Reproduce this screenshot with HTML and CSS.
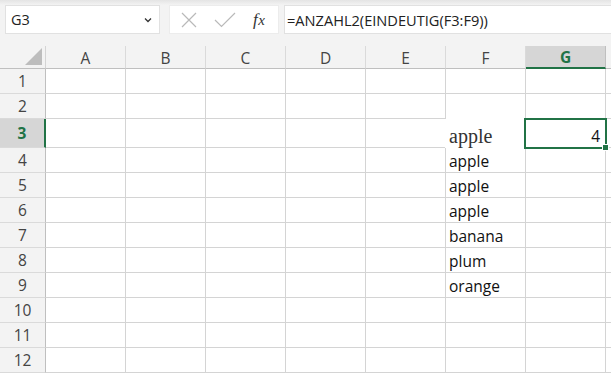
FILE: index.html
```html
<!DOCTYPE html>
<html>
<head>
<meta charset="utf-8">
<link rel="stylesheet" href="styles.css">
</head>
<body>
<div class="app">
  <div class="toolbar">
    <div class="namebox">
      <span class="name">G3</span>
      <svg class="chev" width="8" height="6" viewBox="0 0 8 6"><path d="M1 1.5 L4 4.5 L7 1.5" fill="none" stroke="#333" stroke-width="1.3"/></svg>
    </div>
    <div class="fxgroup">
      <svg class="ico" width="18" height="18" viewBox="0 0 18 18"><path d="M2 2 L16 16 M16 2 L2 16" stroke="#b9b9b9" stroke-width="1.2" fill="none"/></svg>
      <svg class="ico" width="22" height="16" viewBox="0 0 22 16"><path d="M1 8 L7.5 14.5 L21 1" stroke="#b9b9b9" stroke-width="1.2" fill="none"/></svg>
      <span class="fx">f<i>x</i></span>
    </div>
    <div class="formula">=ANZAHL2(EINDEUTIG(F3:F9))</div>
  </div>
  <div class="grid">
    <div class="corner"><div class="tri"></div></div>
    <div class="ch">A</div><div class="ch">B</div><div class="ch">C</div><div class="ch">D</div><div class="ch">E</div><div class="ch">F</div><div class="ch sel">G</div><div class="ch last"></div>

    <div class="rh">1</div><div class="c"></div><div class="c"></div><div class="c"></div><div class="c"></div><div class="c"></div><div class="c"></div><div class="c"></div><div class="c last"></div>
    <div class="rh">2</div><div class="c"></div><div class="c"></div><div class="c"></div><div class="c"></div><div class="c"></div><div class="c nob"></div><div class="c"></div><div class="c last"></div>
    <div class="rh sel tall">3</div><div class="c"></div><div class="c"></div><div class="c"></div><div class="c"></div><div class="c nor"></div><div class="c rich nob">apple</div><div class="c active">4<span class="handle"></span></div><div class="c last"></div>
    <div class="rh">4</div><div class="c"></div><div class="c"></div><div class="c"></div><div class="c"></div><div class="c"></div><div class="c t">apple</div><div class="c"></div><div class="c last"></div>
    <div class="rh">5</div><div class="c"></div><div class="c"></div><div class="c"></div><div class="c"></div><div class="c"></div><div class="c t">apple</div><div class="c"></div><div class="c last"></div>
    <div class="rh">6</div><div class="c"></div><div class="c"></div><div class="c"></div><div class="c"></div><div class="c"></div><div class="c t">apple</div><div class="c"></div><div class="c last"></div>
    <div class="rh">7</div><div class="c"></div><div class="c"></div><div class="c"></div><div class="c"></div><div class="c"></div><div class="c t">banana</div><div class="c"></div><div class="c last"></div>
    <div class="rh">8</div><div class="c"></div><div class="c"></div><div class="c"></div><div class="c"></div><div class="c"></div><div class="c t">plum</div><div class="c"></div><div class="c last"></div>
    <div class="rh">9</div><div class="c"></div><div class="c"></div><div class="c"></div><div class="c"></div><div class="c"></div><div class="c t">orange</div><div class="c"></div><div class="c last"></div>
    <div class="rh">10</div><div class="c"></div><div class="c"></div><div class="c"></div><div class="c"></div><div class="c"></div><div class="c"></div><div class="c"></div><div class="c last"></div>
    <div class="rh">11</div><div class="c"></div><div class="c"></div><div class="c"></div><div class="c"></div><div class="c"></div><div class="c"></div><div class="c"></div><div class="c last"></div>
    <div class="rh">12</div><div class="c"></div><div class="c"></div><div class="c"></div><div class="c"></div><div class="c"></div><div class="c"></div><div class="c"></div><div class="c last"></div>
  </div>
</div>
</body>
</html>
```

FILE: styles.css
```css
* { box-sizing: border-box; }
html, body { margin: 0; padding: 0; }
body {
  width: 611px;
  height: 373px;
  overflow: hidden;
  background: #fff;
  font-family: "Open Sans", "Noto Sans", sans-serif;
}
.app { width: 611px; overflow: hidden; }
.toolbar {
  height: 46px;
  background: linear-gradient(#e4e4e4 0px, #f3f3f3 5px, #f3f3f3 100%);
  display: flex;
  align-items: flex-start;
  padding: 5px 0 0 5px;
}
.namebox {
  width: 155px;
  height: 29px;
  background: #fff;
  border: 1px solid #e1e1e1;
  display: flex;
  align-items: center;
  justify-content: space-between;
  padding: 0 7px 0 5px;
  font-size: 14.5px;
  color: #222;
}
.chev { margin-top: 1px; }
.fxgroup {
  margin-left: 9px;
  width: 110px;
  height: 29px;
  background: #fff;
  border: 1px solid #ececec;
  display: flex;
  align-items: center;
  padding: 0 0 0 10px;
}
.fxgroup .ico:first-child { margin-right: 16px; }
.fxgroup .ico:nth-child(2) { margin-right: 17px; }
.fx {
  font-family: "Liberation Serif", serif;
  font-style: italic;
  font-size: 17px;
  color: #333;
  letter-spacing: 0.5px;
}
.fx i { font-size: 15px; }
.formula {
  margin-left: 5px;
  flex: 1;
  height: 29px;
  background: #fff;
  border: 1px solid #e1e1e1;
  border-right: none;
  display: flex;
  align-items: center;
  padding-left: 2px;
  font-size: 14.6px;
  color: #222;
}
.grid {
  display: grid;
  grid-template-columns: 46px repeat(7, 80px) 5px;
  grid-template-rows: 23px repeat(2, 25px) 29px repeat(9, 25px);
}
.corner {
  background: #f3f3f3;
  border-right: 1px solid #d4d4d4;
  border-bottom: 1px solid #bfbfbf;
  position: relative;
}
.tri {
  position: absolute;
  right: 3px;
  bottom: 3px;
  width: 0; height: 0;
  border-left: 17px solid transparent;
  border-bottom: 17px solid #bdbdbd;
}
.ch {
  background: #f3f3f3;
  border-right: 1px solid #dadada;
  border-bottom: 1px solid #bfbfbf;
  display: flex;
  align-items: center;
  justify-content: center;
  font-size: 15.5px;
  color: #444;
  padding-top: 1px;
}
.ch.sel {
  background: #d6d6d6;
  color: #217346;
  font-weight: 700;
  border-bottom: 2px solid #217346;
  border-right-color: #bfbfbf;
}
.ch.last { border-right: none; }
.rh {
  background: #f3f3f3;
  border-right: 1px solid #bfbfbf;
  border-bottom: 1px solid #dadada;
  display: flex;
  align-items: center;
  justify-content: center;
  font-size: 15.5px;
  color: #444;
}
.rh.sel {
  background: #d6d6d6;
  color: #217346;
  font-weight: 700;
  border-right: 2px solid #217346;
}
.c {
  border-right: 1px solid #d4d4d4;
  border-bottom: 1px solid #d4d4d4;
  background: #fff;
  font-size: 15.5px;
  color: #111;
  display: flex;
  align-items: flex-end;
  padding: 0 0 0 3px;
  white-space: nowrap;
}
.c.last { border-right: none; }
.c.nob { border-bottom-color: #fff; }
.c.nor { border-right-color: #fff; }
.c.t { line-height: 22px; }
.c.rich {
  border-right-color: #fff;
  font-family: "Liberation Serif", serif;
  font-size: 20px;
  color: #333;
  align-items: center;
  padding: 6px 0 0 3px;
  margin-left: -1px;
  padding-left: 4px;
}
.c.active {
  position: relative;
  justify-content: flex-end;
  padding-right: 5px;
  line-height: 22px;
  border: 2px solid #217346;
  margin: -1px -1px -1px -2px;
  padding-bottom: 0;
}
.handle {
  position: absolute;
  right: -4px;
  bottom: -4px;
  width: 7px;
  height: 7px;
  background: #217346;
  border: 1px solid #fff;
}
```
